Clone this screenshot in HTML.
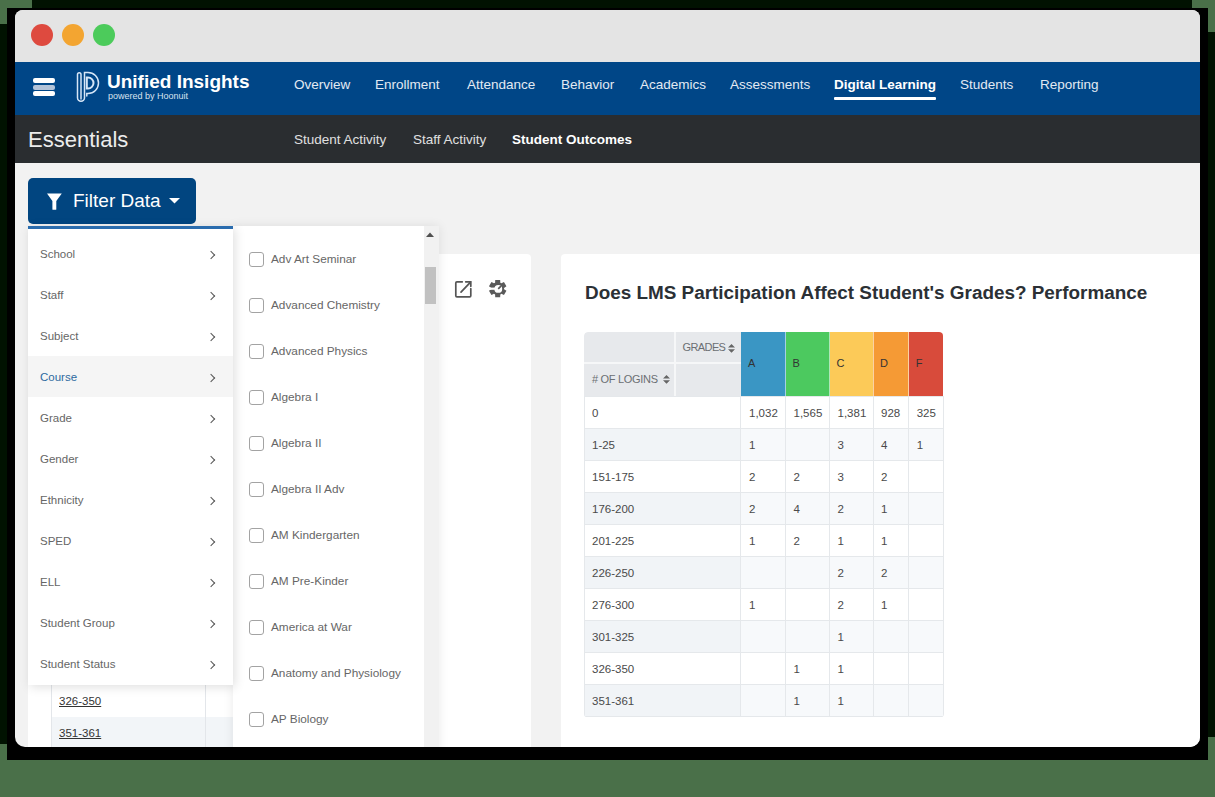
<!DOCTYPE html>
<html><head><meta charset="utf-8"><style>
*{margin:0;padding:0;box-sizing:border-box}
html,body{width:1215px;height:797px;overflow:hidden}
body{background:#4a7049;position:relative;font-family:"Liberation Sans",sans-serif;-webkit-font-smoothing:antialiased}
.a{position:absolute}
.t{position:absolute;white-space:nowrap;line-height:1}
#win{left:15px;top:10px;width:1185px;height:737px;border-radius:8px 8px 10px 10px;overflow:hidden;background:#f2f2f2}
.navi{color:#e3eaf3;font-size:13.5px}
.subi{color:#e0e0e0;font-size:13.5px}
.mi{color:#666;font-size:11.5px}
.ci{color:#666;font-size:11.8px}
.cb{position:absolute;width:14.5px;height:14.5px;border:1px solid #a3a3a3;border-radius:3px;background:#fff}
.chev{position:absolute;width:6px;height:6px;border-right:1.8px solid #555;border-top:1.8px solid #555;transform:rotate(45deg)}
.td{color:#4a4a4a;font-size:11.5px}
</style></head><body>
<div class="a" style="left:0;top:0;width:1215px;height:760px;background:#011201"></div>
<div class="a" style="left:0;top:0;width:32px;height:8px;background:#4a7049"></div>
<div class="a" style="left:0;top:0;width:8px;height:24px;background:#4a7049"></div>
<div class="a" style="left:1192px;top:0;width:23px;height:8px;background:#4a7049"></div>
<div class="a" style="left:1208px;top:0;width:7px;height:32px;background:#4a7049"></div>
<div class="a" style="left:1208px;top:737px;width:7px;height:23px;background:#4a7049"></div>
<div class="a" style="left:0;top:744px;width:8px;height:16px;background:#4a7049"></div>
<div class="a" style="left:7px;top:8px;width:1201px;height:752px;background:#000"></div>
<div id="win" class="a">
<div class="a" style="left:0;top:0;width:1185px;height:52px;background:#e4e4e4"></div>
<div class="a" style="left:16px;top:14px;width:22px;height:22px;border-radius:50%;background:#de4a3f"></div>
<div class="a" style="left:47px;top:14px;width:22px;height:22px;border-radius:50%;background:#f3a531"></div>
<div class="a" style="left:78px;top:14px;width:22px;height:22px;border-radius:50%;background:#4ccb5b"></div>
<div class="a" style="left:0;top:52px;width:1185px;height:53px;background:#004687"></div>
<div class="a" style="left:18px;top:68px;width:22px;height:4.5px;border-radius:2px;background:#fff"></div>
<div class="a" style="left:18px;top:75px;width:22px;height:4.5px;border-radius:2px;background:#b3c3d8"></div>
<div class="a" style="left:18px;top:81px;width:22px;height:4.5px;border-radius:2px;background:#fff"></div>
<svg class="a" style="left:61px;top:61px" width="26" height="34" viewBox="0 0 26 34" fill="none" stroke="#d6e6f7" stroke-width="1.5" stroke-linecap="round"><path d="M5,28 V3.5 A1.75,1.75 0 0 0 1.5,3.5 V26.7 A3.5,3.5 0 0 0 8.5,26.7 V1.5 H12 A10.5,10.5 0 0 1 12,22.5 H10.8 V25"/><path d="M10.8,6.5 H12 A5.5,5.5 0 0 1 12,17.5 H10.8 Z" stroke-width="2"/></svg>
<span class="t" style="left:92px;top:62px;font-size:19px;font-weight:bold;color:#fff">Unified Insights</span>
<span class="t" style="left:93px;top:82px;font-size:9px;color:#d8e2ee">powered by Hoonuit</span>
<span class="t navi" style="left:279px;top:68px">Overview</span>
<span class="t navi" style="left:360px;top:68px">Enrollment</span>
<span class="t navi" style="left:452px;top:68px">Attendance</span>
<span class="t navi" style="left:546px;top:68px">Behavior</span>
<span class="t navi" style="left:625px;top:68px">Academics</span>
<span class="t navi" style="left:715px;top:68px">Assessments</span>
<span class="t navi" style="left:819px;top:68px;font-weight:bold;color:#fff">Digital Learning</span>
<span class="t navi" style="left:945px;top:68px">Students</span>
<span class="t navi" style="left:1025px;top:68px">Reporting</span>
<div class="a" style="left:819px;top:87px;width:102px;height:3px;background:#fff;border-radius:1px"></div>
<div class="a" style="left:0;top:105px;width:1185px;height:48px;background:#2a2d30"></div>
<span class="t" style="left:13px;top:119px;font-size:22px;color:#ececec">Essentials</span>
<span class="t subi" style="left:279px;top:123px">Student Activity</span>
<span class="t subi" style="left:398px;top:123px">Staff Activity</span>
<span class="t subi" style="left:497px;top:123px;font-weight:bold;color:#fff">Student Outcomes</span>
<div class="a" style="left:13px;top:244px;width:503px;height:600px;background:#fff;border-radius:4px"></div>
<div class="a" style="left:546px;top:244px;width:700px;height:600px;background:#fff;border-radius:4px"></div>
<svg class="a" style="left:438px;top:269px" width="20" height="20" viewBox="0 0 20 20" fill="none" stroke="#555" stroke-width="1.7" stroke-linecap="round"><path d="M9.3,2.8 H3.9 Q2.8,2.8 2.8,3.9 V16.7 Q2.8,17.8 3.9,17.8 H16.7 Q17.8,17.8 17.8,16.7 V9.7"/><path d="M12.7,2.8 H17.8 V7.2"/><path d="M8,13.2 L17.3,3.3"/></svg>
<svg class="a" style="left:473px;top:269px" width="20" height="20" viewBox="0 0 20 20"><path fill="#5a5a5a" fill-rule="evenodd" d="M7.10,3.70 L7.22,0.90 L12.18,0.90 L12.30,3.70 L13.46,4.37 L15.95,3.08 L18.43,7.37 L16.06,8.88 L16.06,10.22 L18.43,11.73 L15.95,16.02 L13.46,14.73 L12.30,15.40 L12.18,18.20 L7.22,18.20 L7.10,15.40 L5.94,14.73 L3.45,16.02 L0.97,11.73 L3.34,10.22 L3.34,8.88 L0.97,7.37 L3.45,3.08 L5.94,4.37 Z M6.40,9.90 A3.90,3.90 0 1 0 14.20,9.90 A3.90,3.90 0 1 0 6.40,9.90 Z"/><rect x="0" y="8.6" width="7" height="2.2" fill="#fff"/><path d="M12.6,6.2 L9.6,9.2 L10.8,10.4 L13.8,7.4 Z" fill="#5a5a5a"/></svg>
<div class="a" style="left:36px;top:675px;width:155px;height:33px;background:#fff;border:1px solid #e3e6ea;border-top:none"></div>
<div class="a" style="left:191px;top:675px;width:60px;height:33px;background:#fff;border-right:1px solid #e3e6ea;border-bottom:1px solid #e3e6ea"></div>
<span class="t" style="left:44px;top:686px;font-size:11.5px;color:#333;text-decoration:underline">326-350</span>
<div class="a" style="left:36px;top:707px;width:155px;height:33px;background:#f2f5f8;border:1px solid #e3e6ea;border-top:none"></div>
<div class="a" style="left:191px;top:707px;width:60px;height:33px;background:#f2f5f8;border-right:1px solid #e3e6ea;border-bottom:1px solid #e3e6ea"></div>
<span class="t" style="left:44px;top:718px;font-size:11.5px;color:#333;text-decoration:underline">351-361</span>
<div class="a" style="left:13px;top:168px;width:168px;height:46px;background:#014580;border-radius:5px"></div>
<svg class="a" style="left:32px;top:183px" width="16" height="18" viewBox="0 0 16 18" fill="#fff"><path d="M0,0.6 H14.8 L9.3,8 V16.2 Q9.3,16.8 8.7,16.8 H6 Q5.4,16.8 5.4,16.2 V8 Z"/></svg>
<span class="t" style="left:58px;top:180.5px;font-size:19px;color:#fff">Filter Data</span>
<svg class="a" style="left:154px;top:188px" width="11" height="6" viewBox="0 0 11 6" fill="#fff"><path d="M0,0 H11 L5.5,5.5 Z"/></svg>
<div class="a" style="left:218px;top:216px;width:206px;height:530px;background:#fff;box-shadow:0 0 10px rgba(0,0,0,0.09)"></div>
<div class="a" style="left:409px;top:216px;width:15px;height:530px;background:#f1f1f1"></div>
<div class="a" style="left:410px;top:257px;width:11px;height:37px;background:#c1c1c1"></div>
<svg class="a" style="left:411px;top:222px" width="8" height="5" viewBox="0 0 8 5" fill="#505050"><path d="M0,5 H8 L4,0.5 Z"/></svg>
<div class="cb" style="left:234px;top:242px"></div>
<span class="t ci" style="left:256px;top:244px">Adv Art Seminar</span>
<div class="cb" style="left:234px;top:288px"></div>
<span class="t ci" style="left:256px;top:290px">Advanced Chemistry</span>
<div class="cb" style="left:234px;top:334px"></div>
<span class="t ci" style="left:256px;top:336px">Advanced Physics</span>
<div class="cb" style="left:234px;top:380px"></div>
<span class="t ci" style="left:256px;top:382px">Algebra I</span>
<div class="cb" style="left:234px;top:426px"></div>
<span class="t ci" style="left:256px;top:428px">Algebra II</span>
<div class="cb" style="left:234px;top:472px"></div>
<span class="t ci" style="left:256px;top:474px">Algebra II Adv</span>
<div class="cb" style="left:234px;top:518px"></div>
<span class="t ci" style="left:256px;top:520px">AM Kindergarten</span>
<div class="cb" style="left:234px;top:564px"></div>
<span class="t ci" style="left:256px;top:566px">AM Pre-Kinder</span>
<div class="cb" style="left:234px;top:610px"></div>
<span class="t ci" style="left:256px;top:612px">America at War</span>
<div class="cb" style="left:234px;top:656px"></div>
<span class="t ci" style="left:256px;top:658px">Anatomy and Physiology</span>
<div class="cb" style="left:234px;top:702px"></div>
<span class="t ci" style="left:256px;top:704px">AP Biology</span>
<div class="a" style="left:13px;top:216px;width:205px;height:459px;background:#fff;border-top:3px solid #2a6cae;box-shadow:2px 2px 10px rgba(0,0,0,0.13)"></div>
<span class="t mi" style="left:25px;top:238.5px">School</span>
<div class="chev" style="left:193px;top:241.5px"></div>
<span class="t mi" style="left:25px;top:279.5px">Staff</span>
<div class="chev" style="left:193px;top:282.5px"></div>
<span class="t mi" style="left:25px;top:320.5px">Subject</span>
<div class="chev" style="left:193px;top:323.5px"></div>
<div class="a" style="left:13px;top:345.5px;width:205px;height:41px;background:#f5f5f5"></div>
<span class="t mi" style="left:25px;top:361.5px;color:#2d6a9f">Course</span>
<div class="chev" style="left:193px;top:364.5px"></div>
<span class="t mi" style="left:25px;top:402.5px">Grade</span>
<div class="chev" style="left:193px;top:405.5px"></div>
<span class="t mi" style="left:25px;top:443.5px">Gender</span>
<div class="chev" style="left:193px;top:446.5px"></div>
<span class="t mi" style="left:25px;top:484.5px">Ethnicity</span>
<div class="chev" style="left:193px;top:487.5px"></div>
<span class="t mi" style="left:25px;top:525.5px">SPED</span>
<div class="chev" style="left:193px;top:528.5px"></div>
<span class="t mi" style="left:25px;top:566.5px">ELL</span>
<div class="chev" style="left:193px;top:569.5px"></div>
<span class="t mi" style="left:25px;top:607.5px">Student Group</span>
<div class="chev" style="left:193px;top:610.5px"></div>
<span class="t mi" style="left:25px;top:648.5px">Student Status</span>
<div class="chev" style="left:193px;top:651.5px"></div>
<span class="t" style="left:570px;top:274px;font-size:18.9px;font-weight:bold;color:#2b3035">Does LMS Participation Affect Student's Grades? Performance</span>
<div class="a" style="left:0;top:0;width:1185px;height:737px;clip-path:inset(322px 256px 29.5px 569px round 4px)">
<div class="a" style="left:569px;top:322px;width:157px;height:64px;background:#e7e9ec;border-top-left-radius:4px"></div>
<div class="a" style="left:658.5px;top:322px;width:2px;height:64px;background:#f6f7f8"></div>
<div class="a" style="left:569px;top:352px;width:157px;height:2px;background:#f6f7f8"></div>
<div class="a" style="left:726px;top:322px;width:44.5px;height:64px;background:#3a96c4"></div>
<span class="t" style="left:733px;top:348px;font-size:11px;color:#333">A</span>
<div class="a" style="left:770.5px;top:322px;width:44.0px;height:64px;background:#4cc95f"></div>
<span class="t" style="left:777.5px;top:348px;font-size:11px;color:#333">B</span>
<div class="a" style="left:770.0px;top:322px;width:1px;height:64px;background:rgba(255,255,255,0.55)"></div>
<div class="a" style="left:814.5px;top:322px;width:43.5px;height:64px;background:#fcca58"></div>
<span class="t" style="left:821.5px;top:348px;font-size:11px;color:#333">C</span>
<div class="a" style="left:814.0px;top:322px;width:1px;height:64px;background:rgba(255,255,255,0.55)"></div>
<div class="a" style="left:858px;top:322px;width:35.700000000000045px;height:64px;background:#f59a35"></div>
<span class="t" style="left:865px;top:348px;font-size:11px;color:#333">D</span>
<div class="a" style="left:857.5px;top:322px;width:1px;height:64px;background:rgba(255,255,255,0.55)"></div>
<div class="a" style="left:893.7px;top:322px;width:34.299999999999955px;height:64px;background:#d84b3b;border-top-right-radius:4px"></div>
<span class="t" style="left:900.7px;top:348px;font-size:11px;color:#333">F</span>
<div class="a" style="left:893.2px;top:322px;width:1px;height:64px;background:rgba(255,255,255,0.55)"></div>
<span class="t" style="left:667.5px;top:332px;font-size:11px;letter-spacing:-0.6px;color:#6b6f73">GRADES</span>
<span class="t" style="left:577px;top:364px;font-size:11px;letter-spacing:-0.3px;color:#6b6f73"># OF LOGINS</span>
<svg class="a" style="left:713px;top:333.5px" width="7" height="9" viewBox="0 0 7 9" fill="#666"><path d="M0,3.6 L3.5,0 L7,3.6 Z M0,5.2 H7 L3.5,8.8 Z"/></svg>
<svg class="a" style="left:647.5px;top:365px" width="7" height="9" viewBox="0 0 7 9" fill="#666"><path d="M0,3.6 L3.5,0 L7,3.6 Z M0,5.2 H7 L3.5,8.8 Z"/></svg>
<div class="a" style="left:569px;top:386px;width:157px;height:32px;background:#fff"></div>
<div class="a" style="left:725px;top:386px;width:203px;height:32px;background:#fff"></div>
<span class="t td" style="left:577px;top:397.5px">0</span>
<span class="t td" style="left:734px;top:397.5px">1,032</span>
<span class="t td" style="left:778.5px;top:397.5px">1,565</span>
<span class="t td" style="left:822.5px;top:397.5px">1,381</span>
<span class="t td" style="left:866px;top:397.5px">928</span>
<span class="t td" style="left:901.7px;top:397.5px">325</span>
<div class="a" style="left:569px;top:418px;width:157px;height:32px;background:#f1f4f7"></div>
<div class="a" style="left:725px;top:418px;width:203px;height:32px;background:#f7f9fb"></div>
<span class="t td" style="left:577px;top:429.5px">1-25</span>
<span class="t td" style="left:734px;top:429.5px">1</span>
<span class="t td" style="left:822.5px;top:429.5px">3</span>
<span class="t td" style="left:866px;top:429.5px">4</span>
<span class="t td" style="left:901.7px;top:429.5px">1</span>
<div class="a" style="left:569px;top:450px;width:157px;height:32px;background:#fff"></div>
<div class="a" style="left:725px;top:450px;width:203px;height:32px;background:#fff"></div>
<span class="t td" style="left:577px;top:461.5px">151-175</span>
<span class="t td" style="left:734px;top:461.5px">2</span>
<span class="t td" style="left:778.5px;top:461.5px">2</span>
<span class="t td" style="left:822.5px;top:461.5px">3</span>
<span class="t td" style="left:866px;top:461.5px">2</span>
<div class="a" style="left:569px;top:482px;width:157px;height:32px;background:#f1f4f7"></div>
<div class="a" style="left:725px;top:482px;width:203px;height:32px;background:#f7f9fb"></div>
<span class="t td" style="left:577px;top:493.5px">176-200</span>
<span class="t td" style="left:734px;top:493.5px">2</span>
<span class="t td" style="left:778.5px;top:493.5px">4</span>
<span class="t td" style="left:822.5px;top:493.5px">2</span>
<span class="t td" style="left:866px;top:493.5px">1</span>
<div class="a" style="left:569px;top:514px;width:157px;height:32px;background:#fff"></div>
<div class="a" style="left:725px;top:514px;width:203px;height:32px;background:#fff"></div>
<span class="t td" style="left:577px;top:525.5px">201-225</span>
<span class="t td" style="left:734px;top:525.5px">1</span>
<span class="t td" style="left:778.5px;top:525.5px">2</span>
<span class="t td" style="left:822.5px;top:525.5px">1</span>
<span class="t td" style="left:866px;top:525.5px">1</span>
<div class="a" style="left:569px;top:546px;width:157px;height:32px;background:#f1f4f7"></div>
<div class="a" style="left:725px;top:546px;width:203px;height:32px;background:#f7f9fb"></div>
<span class="t td" style="left:577px;top:557.5px">226-250</span>
<span class="t td" style="left:822.5px;top:557.5px">2</span>
<span class="t td" style="left:866px;top:557.5px">2</span>
<div class="a" style="left:569px;top:578px;width:157px;height:32px;background:#fff"></div>
<div class="a" style="left:725px;top:578px;width:203px;height:32px;background:#fff"></div>
<span class="t td" style="left:577px;top:589.5px">276-300</span>
<span class="t td" style="left:734px;top:589.5px">1</span>
<span class="t td" style="left:822.5px;top:589.5px">2</span>
<span class="t td" style="left:866px;top:589.5px">1</span>
<div class="a" style="left:569px;top:610px;width:157px;height:32px;background:#f1f4f7"></div>
<div class="a" style="left:725px;top:610px;width:203px;height:32px;background:#f7f9fb"></div>
<span class="t td" style="left:577px;top:621.5px">301-325</span>
<span class="t td" style="left:822.5px;top:621.5px">1</span>
<div class="a" style="left:569px;top:642px;width:157px;height:32px;background:#fff"></div>
<div class="a" style="left:725px;top:642px;width:203px;height:32px;background:#fff"></div>
<span class="t td" style="left:577px;top:653.5px">326-350</span>
<span class="t td" style="left:778.5px;top:653.5px">1</span>
<span class="t td" style="left:822.5px;top:653.5px">1</span>
<div class="a" style="left:569px;top:674px;width:157px;height:32px;background:#f1f4f7"></div>
<div class="a" style="left:725px;top:674px;width:203px;height:32px;background:#f7f9fb"></div>
<span class="t td" style="left:577px;top:685.5px">351-361</span>
<span class="t td" style="left:778.5px;top:685.5px">1</span>
<span class="t td" style="left:822.5px;top:685.5px">1</span>
<div class="a" style="left:569px;top:386px;width:359px;height:1px;background:#e5e8eb"></div>
<div class="a" style="left:569px;top:418px;width:359px;height:1px;background:#e5e8eb"></div>
<div class="a" style="left:569px;top:450px;width:359px;height:1px;background:#e5e8eb"></div>
<div class="a" style="left:569px;top:482px;width:359px;height:1px;background:#e5e8eb"></div>
<div class="a" style="left:569px;top:514px;width:359px;height:1px;background:#e5e8eb"></div>
<div class="a" style="left:569px;top:546px;width:359px;height:1px;background:#e5e8eb"></div>
<div class="a" style="left:569px;top:578px;width:359px;height:1px;background:#e5e8eb"></div>
<div class="a" style="left:569px;top:610px;width:359px;height:1px;background:#e5e8eb"></div>
<div class="a" style="left:569px;top:642px;width:359px;height:1px;background:#e5e8eb"></div>
<div class="a" style="left:569px;top:674px;width:359px;height:1px;background:#e5e8eb"></div>
<div class="a" style="left:569px;top:706px;width:359px;height:1px;background:#e5e8eb"></div>
<div class="a" style="left:724.5px;top:386px;width:1px;height:321px;background:#e5e8eb"></div>
<div class="a" style="left:770.0px;top:386px;width:1px;height:321px;background:#e5e8eb"></div>
<div class="a" style="left:814.0px;top:386px;width:1px;height:321px;background:#e5e8eb"></div>
<div class="a" style="left:857.5px;top:386px;width:1px;height:321px;background:#e5e8eb"></div>
<div class="a" style="left:893.2px;top:386px;width:1px;height:321px;background:#e5e8eb"></div>
<div class="a" style="left:927.5px;top:386px;width:1px;height:321px;background:#e5e8eb"></div>
<div class="a" style="left:569px;top:386px;width:1px;height:321px;background:#e5e8eb"></div>
</div>
</div>
</body></html>
